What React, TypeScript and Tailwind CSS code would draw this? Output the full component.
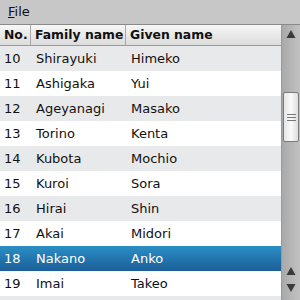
import React from 'react';

const rows = [
  ['10', 'Shirayuki', 'Himeko'],
  ['11', 'Ashigaka', 'Yui'],
  ['12', 'Ageyanagi', 'Masako'],
  ['13', 'Torino', 'Kenta'],
  ['14', 'Kubota', 'Mochio'],
  ['15', 'Kuroi', 'Sora'],
  ['16', 'Hirai', 'Shin'],
  ['17', 'Akai', 'Midori'],
  ['18', 'Nakano', 'Anko'],
  ['19', 'Imai', 'Takeo'],
  ['20', '', ''],
];

const App: React.FC = () => {
  return (
    <div className="w-[300px] h-[300px] overflow-hidden flex flex-col bg-[#c7c7c7] text-[13px] text-[#111] font-['DejaVu_Sans',sans-serif]">
      <div className="h-6 shrink-0 flex items-center px-2">
        <span><span className="underline">F</span>ile</span>
      </div>
      <div className="flex flex-1 min-h-0 border-t border-[#8a8a8a]">
        <div className="flex-1 min-w-0 flex flex-col bg-white">
          <div className="h-[21px] shrink-0 flex font-bold text-[12.4px] bg-gradient-to-b from-[#f7f7f7] to-[#dcdcdc] border-b border-[#9a9a9a]">
            <div className="w-[31px] px-[4px] flex items-center border-r border-[#a8a8a8]">No.</div>
            <div className="w-[95px] px-[4px] flex items-center border-r border-[#a8a8a8] whitespace-nowrap overflow-hidden">Family name</div>
            <div className="flex-1 px-[4px] flex items-center whitespace-nowrap">Given name</div>
          </div>
          {rows.map((r, i) => {
            const sel = r[0] === '18';
            const bg = sel
              ? 'bg-gradient-to-b from-[#2b8fc6] to-[#1b5e98] text-white'
              : i % 2 === 0
                ? 'bg-[#e8e9eb]'
                : 'bg-white';
            return (
              <div key={r[0]} className={`h-[25px] shrink-0 flex items-center ${bg}`}>
                <div className="w-[31px] pl-[4px]">{r[0] === '20' ? '' : r[0]}</div>
                <div className="w-[95px] pl-[5px]">{r[1]}</div>
                <div className="flex-1 pl-[5px]">{r[2]}</div>
              </div>
            );
          })}
        </div>
        <div className="w-[19px] shrink-0 relative bg-gradient-to-r from-[#a9a9a9] to-[#c2c2c2] border-l border-[#9a9a9a]">
          <svg className="absolute left-[4px] top-[4px]" width="10" height="10" viewBox="0 0 10 10">
            <path d="M5 1 L9.5 9 L0.5 9 Z" fill="#3a3a3a" />
          </svg>
          <div className="absolute left-[1px] top-[67px] w-[16px] h-[50px] rounded-[2px] border border-[#7a7a7a] bg-gradient-to-r from-[#e6e6e6] via-[#fafafa] to-[#dedede] flex flex-col items-center justify-center gap-[2px]">
            <div className="w-[9px] h-[1px] bg-[#777]" />
            <div className="w-[9px] h-[1px] bg-[#777]" />
            <div className="w-[9px] h-[1px] bg-[#777]" />
          </div>
          <svg className="absolute left-[4px] top-[241px]" width="10" height="10" viewBox="0 0 10 10">
            <path d="M5 1 L9.5 9 L0.5 9 Z" fill="#3a3a3a" />
          </svg>
          <svg className="absolute left-[4px] top-[258px]" width="10" height="10" viewBox="0 0 10 10">
            <path d="M0.5 1 L9.5 1 L5 9 Z" fill="#3a3a3a" />
          </svg>
        </div>
      </div>
    </div>
  );
};

export default App;
